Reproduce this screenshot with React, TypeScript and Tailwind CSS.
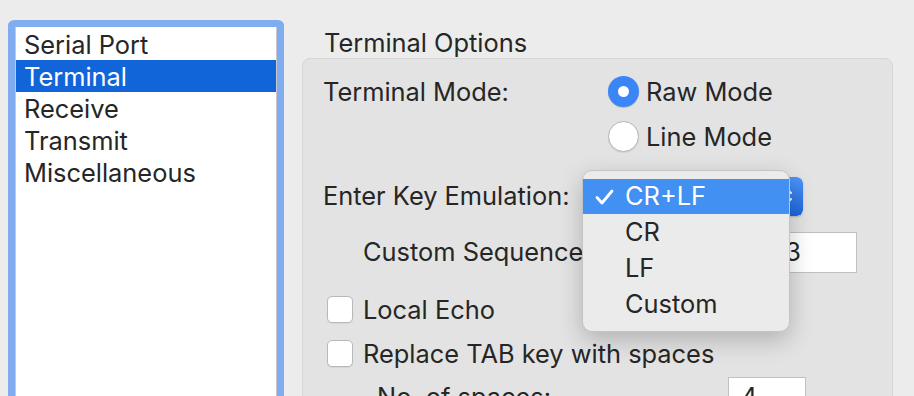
import { useState } from "react";

const sections = ["Serial Port", "Terminal", "Receive", "Transmit", "Miscellaneous"];

function Radio({ checked, label }: { checked: boolean; label: string }) {
  return (
    <div className="flex items-center gap-[7px]">
      {checked ? (
        <span className="flex h-[31px] w-[31px] items-center justify-center rounded-full bg-[#3b86f7] shadow-[0_1px_1px_rgba(0,0,0,0.15)]">
          <span className="h-[11px] w-[11px] rounded-full bg-white" />
        </span>
      ) : (
        <span className="h-[31px] w-[31px] rounded-full border border-[#b4b4b4] bg-white shadow-[0_1px_1px_rgba(0,0,0,0.08)]" />
      )}
      <span>{label}</span>
    </div>
  );
}

function Checkbox({ label }: { label: string }) {
  return (
    <div className="flex items-center gap-[10px] pl-[4px]">
      <span className="h-[27px] w-[26px] rounded-[5px] border border-[#b8b8b8] bg-white shadow-[0_1px_1px_rgba(0,0,0,0.06)]" />
      <span>{label}</span>
    </div>
  );
}

function EnterKeyMenu() {
  const options = ["CR+LF", "CR", "LF", "Custom"];
  return (
    <div className="absolute left-[279px] top-[111px] w-[208px] rounded-[10px] border border-[#c4c4c4] bg-[#ebebeb] pb-[9px] pt-[8px] shadow-[0_8px_24px_rgba(0,0,0,0.22)]">
      {options.map((o, i) => (
        <div
          key={o}
          className={
            i === 0
              ? "flex h-[35px] items-center bg-[#4290f2] text-white"
              : "flex h-[36px] items-center text-[#262626]"
          }
        >
          <span className="flex w-[42px] justify-center">
            {i === 0 && (
              <svg width="19" height="16" viewBox="0 0 19 16" fill="none">
                <path d="M2 8.5 L7 14 L17 2" stroke="white" strokeWidth="2.8" strokeLinecap="round" strokeLinejoin="round" />
              </svg>
            )}
          </span>
          <span>{o}</span>
        </div>
      ))}
    </div>
  );
}

export default function App() {
  const [selected] = useState("Terminal");

  return (
    <div
      className="flex h-[396px] w-[914px] overflow-hidden bg-[#ececec] text-[25.4px] text-[#262626]"
      style={{ fontFamily: "Inter, 'Liberation Sans', sans-serif" }}
    >
      <div className="pl-[8px] pt-[20px]">
        <div className="h-[420px] w-[276px] rounded-[6px] border-[7px] border-b-0 border-[#80adf0]">
          <div className="h-full border-x border-[#c9c9c9] bg-white pt-[1px]">
            {sections.map((s) => (
              <div
                key={s}
                className={
                  s === selected
                    ? "flex h-[32px] items-center bg-[#1264d9] pl-[8px] pt-[2px] text-white"
                    : "flex h-[32px] items-center pl-[8px] pt-[2px]"
                }
              >
                {s}
              </div>
            ))}
          </div>
        </div>
      </div>

      <div className="ml-[18px] pt-[28px]">
        <div className="h-[30px] pl-[22px] leading-[30px]">Terminal Options</div>
        <div className="relative h-[400px] w-[591px] rounded-[8px] border border-[#d6d6d6] bg-[#e3e3e3] pl-[20px] pt-[13px]">
          <div className="grid grid-cols-[285px_1fr]">
            <div className="flex h-[40px] items-center">Terminal Mode:</div>
            <div className="flex h-[40px] items-center">
              <Radio checked label="Raw Mode" />
            </div>
            <div className="mt-[5px]" />
            <div className="mt-[5px] flex h-[40px] items-center">
              <Radio checked={false} label="Line Mode" />
            </div>
          </div>

          <div className="mt-[19px] flex h-[40px] items-center">
            <span className="w-[267px]">Enter Key Emulation:</span>
            <div className="flex h-[39px] w-[213px] items-stretch overflow-hidden rounded-[6px] bg-white shadow-[0_1px_2px_rgba(0,0,0,0.2)]">
              <span className="flex-1" />
              <span className="flex w-[32px] items-center justify-center rounded-[6px] bg-gradient-to-b from-[#4d95f8] to-[#1d66dd]">
                <svg width="12" height="22" viewBox="0 0 12 22" fill="none">
                  <path d="M2 8 L6 4 L10 8" stroke="white" strokeWidth="2" strokeLinecap="round" strokeLinejoin="round" />
                  <path d="M2 14 L6 18 L10 14" stroke="white" strokeWidth="2" strokeLinecap="round" strokeLinejoin="round" />
                </svg>
              </span>
            </div>
          </div>

          <div className="mt-[16px] flex h-[41px] items-center">
            <span className="w-[427px] pl-[40px]">Custom Sequence:</span>
            <div className="flex h-[41px] w-[107px] items-center border border-[#c0c0c0] bg-white pl-[24px]">
              13
            </div>
          </div>

          <div className="mt-[17px] flex h-[40px] items-center">
            <Checkbox label="Local Echo" />
          </div>
          <div className="mt-[4px] flex h-[40px] items-center">
            <Checkbox label="Replace TAB key with spaces" />
          </div>
          <div className="mt-[3px] flex h-[41px] items-center">
            <span className="w-[405px] pl-[54px]">No. of spaces:</span>
            <div className="flex h-[41px] w-[78px] items-center border border-[#c0c0c0] bg-white pl-[12px]">4</div>
          </div>

          <EnterKeyMenu />
        </div>
      </div>
    </div>
  );
}
